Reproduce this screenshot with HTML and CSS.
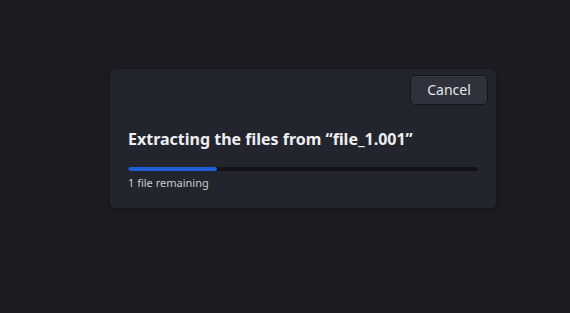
FILE: index.html
```html
<!DOCTYPE html>
<html>
<head>
<meta charset="utf-8">
<link rel="stylesheet" href="styles.css">
</head>
<body>
<div class="dialog">
  <div class="header">
    <button class="cancel">Cancel</button>
  </div>
  <div class="content">
    <h1 class="title">Extracting the files from “file_1.001”</h1>
    <div class="trough"><div class="fill" style="width:25.4%"></div></div>
    <div class="status">1 file remaining</div>
  </div>
</div>
</body>
</html>
```
FILE: styles.css
```css
html, body {
  margin: 0;
  height: 100%;
}
body {
  background: #1c1d23;
  font-family: "Noto Sans", "Open Sans", sans-serif;
  padding: 69px 0 0 110px;
  box-sizing: border-box;
}
.dialog {
  width: 386px;
  height: 139px;
  box-sizing: border-box;
  background: #23252e;
  border-radius: 6px;
  box-shadow: 0 0 0 1px #17181d, 0 2px 6px rgba(0,0,0,0.35);
  display: flex;
  flex-direction: column;
}
.header {
  display: flex;
  justify-content: flex-end;
  padding: 6px 8px 0 0;
}
.cancel {
  width: 78px;
  height: 30px;
  background: #2f313d;
  color: #e4e5ea;
  border: 1px solid #15161b;
  border-radius: 5px;
  font-family: inherit;
  font-size: 14px;
  padding: 0 0 1px 0;
  box-shadow: inset 0 1px 0 rgba(255,255,255,0.04);
}
.content {
  padding: 0 18px;
}
.title {
  margin: 24px 0 0 0;
  font-size: 16px;
  font-weight: 700;
  color: #eeeef1;
  line-height: 20px;
}
.trough {
  margin-top: 18px;
  height: 4px;
  background: #121317;
  border-radius: 2px;
  overflow: hidden;
}
.fill {
  height: 100%;
  background: #1f5fd6;
  border-radius: 2px;
}
.status {
  margin-top: 4px;
  font-size: 11px;
  color: #c9cad0;
  line-height: 15px;
}
```
